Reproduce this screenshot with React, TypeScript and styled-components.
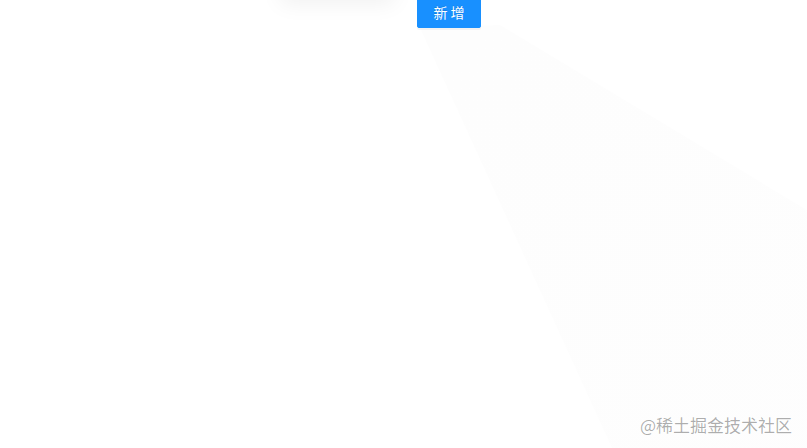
import React from "react";
import styled, { createGlobalStyle } from "styled-components";

const Global = createGlobalStyle`
  html, body { margin: 0; padding: 0; background: #ffffff; }
  body { font-family: "Noto Sans CJK SC", "Noto Sans", sans-serif; overflow: hidden; }
`;

const Page = styled.div`
  position: relative;
  width: 807px;
  height: 448px;
  overflow: hidden;
  background: #ffffff;
`;

const Beam = styled.svg`
  position: absolute;
  left: 0;
  top: 0;
  width: 807px;
  height: 448px;
  pointer-events: none;
`;

const Toolbar = styled.div`
  position: relative;
  display: flex;
  align-items: flex-start;
  padding-left: 280px;
  gap: 22px;
`;

const ShadowCard = styled.div`
  width: 115px;
  height: 30px;
  margin-top: -30px;
  background: #ffffff;
  border-radius: 4px;
  box-shadow: 0 4px 22px rgba(0, 0, 0, 0.06);
`;

const Button = styled.button`
  box-sizing: border-box;
  width: 64px;
  height: 32px;
  margin-top: -4px;
  padding: 4px 15px;
  border: 1px solid #1890ff;
  border-radius: 2px;
  background: #1890ff;
  color: #ffffff;
  font-family: "Noto Sans CJK SC", "Noto Sans", sans-serif;
  font-size: 14px;
  line-height: 22px;
  white-space: pre;
  box-shadow: 0 2px 0 rgba(0, 0, 0, 0.045);
  text-shadow: 0 -1px 0 rgba(0, 0, 0, 0.12);
  cursor: pointer;
`;

const Watermark = styled.div`
  position: absolute;
  right: 15px;
  bottom: 11px;
  color: rgba(0, 0, 0, 0.33);
  font-family: "Noto Sans CJK SC", "Noto Sans", sans-serif;
  font-size: 17px;
  line-height: 24px;
`;

export default function App() {
  return (
    <>
      <Global />
      <Page>
        <Beam viewBox="0 0 807 448">
          <defs>
            <linearGradient id="beamFade" x1="0" y1="0" x2="1" y2="1">
              <stop offset="0" stopColor="#000" stopOpacity="0.008" />
              <stop offset="1" stopColor="#000" stopOpacity="0.006" />
            </linearGradient>
          </defs>
          <polygon points="420,28 500,25 807,210 807,448 612,448" fill="url(#beamFade)" />
        </Beam>
        <Toolbar>
          <ShadowCard />
          <Button>新 增</Button>
        </Toolbar>
        <Watermark>@稀土掘金技术社区</Watermark>
      </Page>
    </>
  );
}
